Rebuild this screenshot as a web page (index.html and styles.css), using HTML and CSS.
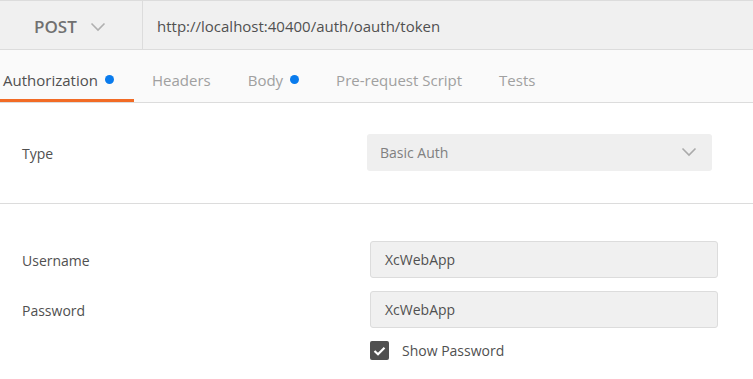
FILE: index.html
```html
<!DOCTYPE html>
<html>
<head>
<meta charset="utf-8">
<link rel="stylesheet" href="styles.css">
</head>
<body>
<div class="urlbar">
  <div class="method">
    <span class="method-name">POST</span>
    <svg class="chev" width="16" height="10" viewBox="0 0 16 10"><path d="M1.5 1.5 L8 8 L14.5 1.5" fill="none" stroke="#b0b0b0" stroke-width="1.6"/></svg>
  </div>
  <div class="url">http://localhost:40400/auth/oauth/token</div>
</div>
<div class="tabs">
  <div class="tab active">Authorization<span class="dot"></span></div>
  <div class="tab">Headers</div>
  <div class="tab">Body<span class="dot"></span></div>
  <div class="tab">Pre-request Script</div>
  <div class="tab">Tests</div>
</div>
<div class="type-row">
  <div class="label">Type</div>
  <div class="select">
    <span>Basic Auth</span>
    <svg width="16" height="10" viewBox="0 0 16 10"><path d="M1.5 1.5 L8 8 L14.5 1.5" fill="none" stroke="#aaaaaa" stroke-width="1.6"/></svg>
  </div>
</div>
<div class="fields">
  <div class="field-row">
    <div class="label">Username</div>
    <div class="input">XcWebApp</div>
  </div>
  <div class="field-row">
    <div class="label">Password</div>
    <div class="input">XcWebApp</div>
  </div>
  <div class="check-row">
    <span class="box"><svg width="13" height="10" viewBox="0 0 13 10"><path d="M1.5 5 L5 8.2 L11.5 1.8" fill="none" stroke="#fff" stroke-width="2.2"/></svg></span>
    <span class="check-label">Show Password</span>
  </div>
</div>
</body>
</html>
```
FILE: styles.css
```css
* { box-sizing: border-box; }
body {
  margin: 0;
  font-family: "Open Sans", "Noto Sans", sans-serif;
  background: #fff;
  color: #505050;
  width: 753px;
  height: 379px;
  overflow: hidden;
}
.urlbar {
  display: flex;
  height: 50px;
  background: #f0f0f0;
  border-top: 1px solid #dcdcdc;
  border-bottom: 1px solid #dcdcdc;
}
.method {
  width: 143px;
  border-right: 1px solid #dcdcdc;
  display: flex;
  align-items: center;
  padding-left: 34px;
  gap: 13px;
  padding-top: 2px;
}
.method-name {
  font-size: 17px;
  font-weight: 600;
  color: #707070;
}
.chev { margin-top: 1px; }
.url {
  display: flex;
  align-items: center;
  padding-left: 14px;
  padding-top: 1px;
  font-size: 15px;
  color: #505050;
}
.tabs {
  display: flex;
  height: 53px;
  background: #fafafa;
  border-bottom: 1px solid #dcdcdc;
}
.tab {
  display: flex;
  align-items: center;
  font-size: 15px;
  color: #a0a0a0;
  margin-right: 37px;
  padding-top: 7px;
}
.tab.active {
  color: #505050;
  padding-left: 3px;
  width: 134px;
  margin-right: 18px;
  border-bottom: 3px solid #f26b25;
  padding-top: 10px;
}
.dot {
  width: 9px;
  height: 9px;
  border-radius: 50%;
  background: #097bed;
  margin-left: 7px;
}
.type-row {
  display: flex;
  align-items: center;
  height: 101px;
  border-bottom: 1px solid #dcdcdc;
  padding: 0 0 0 22px;
}
.label {
  font-size: 14px;
  width: 345px;
  color: #505050;
}
.select {
  width: 345px;
  height: 37px;
  background: #efefef;
  border-radius: 3px;
  display: flex;
  align-items: center;
  justify-content: space-between;
  padding: 0 15px 0 13px;
  font-size: 14px;
  color: #808080;
  margin-bottom: 2px;
}
.fields {
  padding: 37px 0 0 22px;
}
.field-row {
  display: flex;
  align-items: center;
  margin-bottom: 13px;
}
.field-row .label { width: 348px; padding-top: 2px; }
.input {
  width: 348px;
  height: 37px;
  background: #f0f0f0;
  border: 1px solid #dcdcdc;
  border-radius: 3px;
  display: flex;
  align-items: center;
  padding-left: 14px;
  font-size: 14px;
  color: #505050;
}
.check-row {
  display: flex;
  align-items: center;
  margin-left: 348px;
  margin-top: 0;
}
.box {
  width: 19px;
  height: 19px;
  border-radius: 2px;
  background: #505050;
  display: flex;
  align-items: center;
  justify-content: center;
}
.check-label {
  margin-left: 13px;
  font-size: 14px;
  color: #505050;
}
```
